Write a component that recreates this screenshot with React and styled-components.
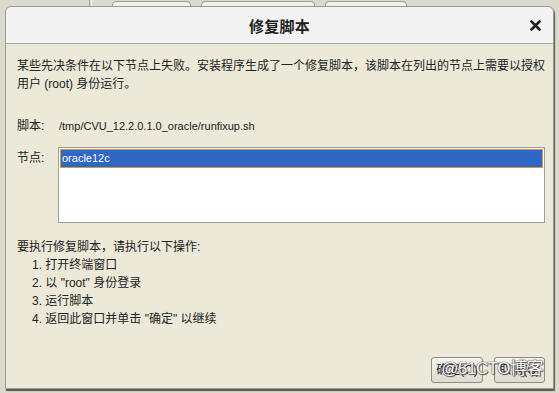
import React from "react";
import styled, { createGlobalStyle } from "styled-components";

const GlobalStyle = createGlobalStyle`
    html, body {
        margin: 0;
        padding: 0;
        background: #d9d6ca;
    }
    body {
        font-family: "Liberation Sans", "Noto Sans CJK SC", sans-serif;
        font-size: 12px;
        color: #222;
    }
`;

const Desktop = styled.div`
    position: relative;
    width: 559px;
    height: 393px;
    overflow: hidden;
    background: #dcd9cd;
`;

const BackToolbar = styled.div`
    display: flex;
    flex-flow: row nowrap;
    align-items: flex-start;
    gap: 10px;
    padding: 1px 0 0 89px;
`;

const Divider = styled.div`
    width: 1px;
    height: 20px;
    margin-top: -1px;
    border-left: 1px solid #a9a698;
    border-right: 1px solid #f4f2ea;
    margin-right: 10px;
`;

const BackButton = styled.div`
    width: ${props => props.width}px;
    height: 22px;
    border: 1px solid #9c9a90;
    border-radius: 4px;
    background: linear-gradient(#f3f2ec, #e3e0d4);
`;

const Dialog = styled.div`
    position: absolute;
    left: 5px;
    top: 6px;
    width: 547px;
    height: 381px;
    display: flex;
    flex-flow: column nowrap;
    background: #ece9d9;
    border: 1px solid #9b9b96;
    border-radius: 6px 6px 0 0;
    box-shadow: 1px 2px 1px rgba(40, 40, 40, 0.75);
`;

const TitleBar = styled.div`
    height: 36px;
    display: grid;
    grid-template-columns: 1fr auto 1fr;
    align-items: center;
    background: #f3f3f3;
    border-bottom: 1px solid #a9a9a4;
    border-radius: 6px 6px 0 0;
`;

const Title = styled.div`
    grid-column: 2;
    font-size: 15px;
    font-weight: bold;
    color: #1e1e1e;
    letter-spacing: 0.3px;
`;

const Close = styled.div`
    grid-column: 3;
    justify-self: end;
    margin-right: 12px;
    display: flex;
    align-items: center;
`;

const Body = styled.div`
    flex: 1;
    display: flex;
    flex-flow: column nowrap;
    padding: 13px 8px 5px 11px;
    line-height: 18px;
`;

const Message = styled.p`
    margin: 0;
    width: 532px;
`;

const FieldRow = styled.div`
    display: grid;
    grid-template-columns: 41px 1fr;
    align-items: start;
    margin-top: ${props => props.top}px;
`;

const Label = styled.div`
    margin-top: ${props => props.offset || 0}px;
`;

const Value = styled.div`
    padding-left: 1px;
    font-size: 11px;
`;

const ListBox = styled.div`
    height: 72px;
    background: #fff;
    border: 1px solid #9d9d9a;
    padding: 1px;
`;

const ListItem = styled.div`
    height: 17px;
    line-height: 17px;
    padding-left: 1px;
    font-size: 11px;
    color: ${props => (props.selected ? "#fff" : "#222")};
    background: ${props => (props.selected ? "#2f67c4" : "transparent")};
    border: 1px solid ${props => (props.selected ? "#d9973a" : "transparent")};
`;

const Instructions = styled.div`
    margin-top: 15px;
`;

const Steps = styled.ol`
    margin: 0;
    padding: 0 0 0 15px;
    list-style: none;
`;

const Footer = styled.div`
    margin-top: auto;
    display: flex;
    justify-content: flex-end;
    gap: 11px;
    position: relative;
`;

const Button = styled.button`
    width: ${props => props.width}px;
    height: 26px;
    padding: 0;
    font: inherit;
    font-size: 12px;
    color: #222;
    border: 1px solid #8d8c86;
    border-radius: 3px;
    background: linear-gradient(#f6f5f0, #dedbcf);
`;

const Watermark = styled.div`
    position: absolute;
    right: 2px;
    top: 3px;
    font-size: 17px;
    font-family: "Liberation Sans", "Noto Sans CJK SC", sans-serif;
    color: #fff;
    letter-spacing: -0.5px;
    text-shadow: 0 0 1px #333, 0 0 1px #333, 1px 1px 1px #555;
    pointer-events: none;
`;

const steps = [
    "1. 打开终端窗口",
    "2. 以 \"root\" 身份登录",
    "3. 运行脚本",
    "4. 返回此窗口并单击 \"确定\" 以继续",
];

const App = () => {
    return (
        <Desktop>
            <GlobalStyle />
            <BackToolbar>
                <Divider />
                <BackButton width={77} />
                <BackButton width={112} />
                <BackButton width={80} />
            </BackToolbar>
            <Dialog>
                <TitleBar>
                    <Title>修复脚本</Title>
                    <Close>
                        <svg width="11" height="11" viewBox="0 0 11 11">
                            <path d="M1.5 1.5 L9.5 9.5 M9.5 1.5 L1.5 9.5" stroke="#222" strokeWidth="2.6" strokeLinecap="round" />
                        </svg>
                    </Close>
                </TitleBar>
                <Body>
                    <Message>
                        某些先决条件在以下节点上失败。安装程序生成了一个修复脚本，该脚本在列出的节点上需要以授权用户 (root) 身份运行。
                    </Message>
                    <FieldRow top={24}>
                        <Label>脚本:</Label>
                        <Value>/tmp/CVU_12.2.0.1.0_oracle/runfixup.sh</Value>
                    </FieldRow>
                    <FieldRow top={12}>
                        <Label offset={2}>节点:</Label>
                        <ListBox>
                            <ListItem selected>oracle12c</ListItem>
                        </ListBox>
                    </FieldRow>
                    <Instructions>
                        要执行修复脚本，请执行以下操作:
                        <Steps>
                            {steps.map(step => (
                                <li key={step}>{step}</li>
                            ))}
                        </Steps>
                    </Instructions>
                    <Footer>
                        <Button width={52}>确定(O)</Button>
                        <Button width={51}>取消(C)</Button>
                        <Watermark>@51CTO博客</Watermark>
                    </Footer>
                </Body>
            </Dialog>
        </Desktop>
    );
};

export default App;
